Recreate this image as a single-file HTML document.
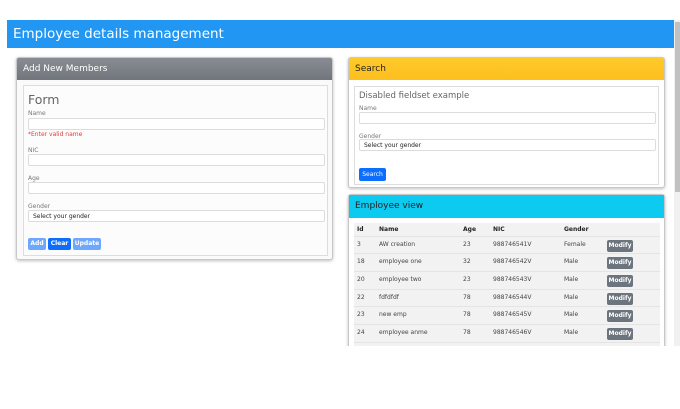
<!DOCTYPE html>
<html><head><style>
*{box-sizing:border-box;margin:0;padding:0}
body{width:680px;height:409px;background:#fff;font-family:"DejaVu Sans","Liberation Sans",sans-serif;position:relative;overflow:hidden}
.vp{position:absolute;left:0;top:0;width:680px;height:346px;overflow:hidden}
.abs{position:absolute}
.hdr{left:7px;top:20px;width:667px;height:28px;background:#2196f3;color:#fff;font-size:13.5px;padding:6px 6px;}
.card{border:1px solid #c8c8c8;border-radius:3px;box-shadow:0 1px 3px rgba(0,0,0,.25);background:#fff}
.ch{height:22px;font-size:9px;padding:6px 6px}
.lbl{font-size:6px;color:#777}
.inp{height:12px;border:1px solid #dcdcdc;border-radius:2px;background:#fff;font-size:6px;color:#222;padding:2px 4px}
.btn{height:12px;border-radius:2px;color:#fff;font-size:6px;text-align:center;line-height:12px;font-weight:bold}
table{border-collapse:collapse;font-size:6px;color:#444;width:100%}
td,th{text-align:left;height:17.7px;padding:0 3px;border-top:1px solid #e4e4e4;vertical-align:top;padding-top:4px}
th{color:#222;padding-top:3px;height:13px}
.m{display:inline-block;background:#6c757d;color:#fff;border-radius:2px;width:26px;height:12px;line-height:12px;text-align:center;font-weight:bold;margin-top:-1px}
</style></head><body>
<div class="vp">
<div class="abs hdr">Employee details management</div>

<div class="abs card" style="left:16px;top:57px;width:317px;height:203px;background:#fafafa">
 <div class="ch" style="background:linear-gradient(#878d93,#70767c);color:#fff;border-radius:2px 2px 0 0">Add New Members</div>
 <div class="abs" style="left:6px;top:27px;width:305px;height:171px;border:1px solid #ddd;background:#fcfcfc">
  <div class="abs" style="left:4px;top:6px;font-size:12.5px;color:#666">Form</div>
  <div class="abs lbl" style="left:4px;top:24px">Name</div>
  <div class="abs inp" style="left:4px;top:32px;width:297px"></div>
  <div class="abs" style="left:4px;top:45px;font-size:6px;color:#e53935">*Enter valid name</div>
  <div class="abs lbl" style="left:4px;top:61px">NIC</div>
  <div class="abs inp" style="left:4px;top:68px;width:297px"></div>
  <div class="abs lbl" style="left:4px;top:89px">Age</div>
  <div class="abs inp" style="left:4px;top:96px;width:297px"></div>
  <div class="abs lbl" style="left:4px;top:117px">Gender</div>
  <div class="abs inp" style="left:4px;top:124px;width:297px">Select your gender</div>
  <div class="abs btn" style="left:4px;top:152px;width:18px;background:#6ea8fe">Add</div>
  <div class="abs btn" style="left:24px;top:152px;width:23px;background:#0d6efd">Clear</div>
  <div class="abs btn" style="left:49px;top:152px;width:28px;background:#6ea8fe">Update</div>
 </div>
</div>

<div class="abs card" style="left:348px;top:57px;width:317px;height:131px">
 <div class="ch" style="background:linear-gradient(#ffca2c,#fcbf1e);color:#222">Search</div>
 <div class="abs" style="left:5px;top:28px;width:305px;height:99px;border:1px solid #ddd">
  <div class="abs" style="left:4px;top:4px;font-size:8.5px;color:#666">Disabled fieldset example</div>
  <div class="abs lbl" style="left:4px;top:18px">Name</div>
  <div class="abs inp" style="left:4px;top:25px;width:297px"></div>
  <div class="abs lbl" style="left:4px;top:46px">Gender</div>
  <div class="abs inp" style="left:4px;top:52px;width:297px">Select your gender</div>
  <div class="abs btn" style="left:4px;top:81px;width:27px;background:#0d6efd;height:13px;line-height:13px;font-weight:normal">Search</div>
 </div>
</div>

<div class="abs card" style="left:348px;top:194px;width:317px;height:200px">
 <div class="ch" style="background:#0dcaf0;color:#222;height:23px">Employee view</div>
 <div class="abs" style="left:5px;top:28px;width:306px;background:#f2f2f2">
 <table>
  <tr><th style="width:22px;border-top:0">Id</th><th style="width:84px;border-top:0">Name</th><th style="width:30px;border-top:0">Age</th><th style="width:71px;border-top:0">NIC</th><th style="width:43px;border-top:0">Gender</th><th style="border-top:0"></th></tr>
  <tr><td>3</td><td>AW creation</td><td>23</td><td>988746541V</td><td>Female</td><td><span class="m">Modify</span></td></tr>
  <tr><td>18</td><td>employee one</td><td>32</td><td>988746542V</td><td>Male</td><td><span class="m">Modify</span></td></tr>
  <tr><td>20</td><td>employee two</td><td>23</td><td>988746543V</td><td>Male</td><td><span class="m">Modify</span></td></tr>
  <tr><td>22</td><td>fdfdfdf</td><td>78</td><td>988746544V</td><td>Male</td><td><span class="m">Modify</span></td></tr>
  <tr><td>23</td><td>new emp</td><td>78</td><td>988746545V</td><td>Male</td><td><span class="m">Modify</span></td></tr>
  <tr><td>24</td><td>employee anme</td><td>78</td><td>988746546V</td><td>Male</td><td><span class="m">Modify</span></td></tr>
  <tr><td></td><td></td><td></td><td></td><td></td><td><span class="m">Modify</span></td></tr>
 </table>
 </div>
</div>

<div class="abs" style="left:674px;top:20px;width:6px;height:326px;background:#f1f1f1"></div>
<div class="abs" style="left:675px;top:22px;width:5px;height:170px;background:#c1c1c1"></div>
</div>
</body></html>
